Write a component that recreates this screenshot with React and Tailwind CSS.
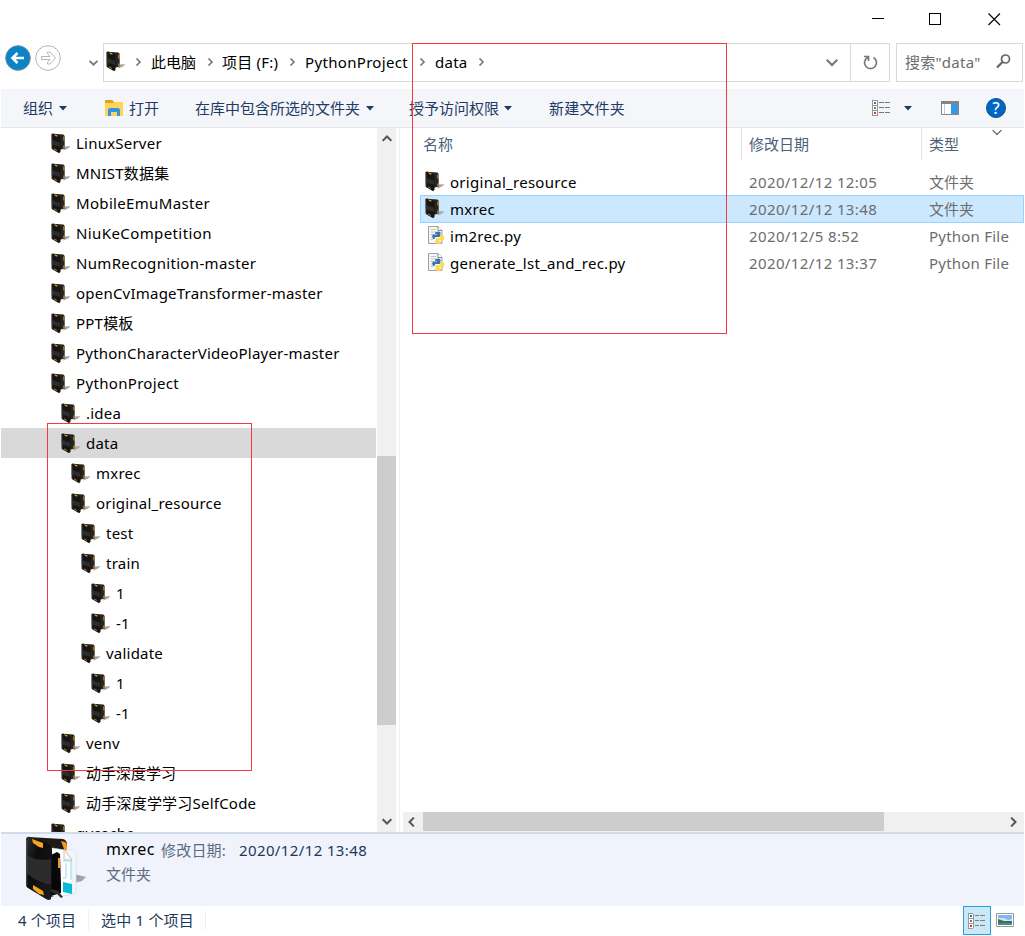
function FolderIcon({ className = "" }) {
  return (
    <svg className={"shrink-0 " + className} width="20" height="21" viewBox="0 0 20 21">
      <path d="M12 13.500 19.500 13.300 17 15.500 12.500 17.500Z" fill="#a6a6a6" />
      <path d="M2 .8 12.500 1.500 13.700 3V15.500L8 17Z" fill="#262522" />
      <path d="M12.200 3.500h1.600v4h-1.600zM12.200 12.500h1.600v3.200h-1.600z" fill="#b87b30" />
      <path d="M.5 1 2 .6 8 2.500 9.500 4.500 9.500 18.500 8.200 20.300.8 16Z" fill="#151515" />
      <path d="M.8 7 9 9.500V14L.8 11.500Z" fill="#2c2c2c" />
      <path d="M1 1.500V15.500" stroke="#4a4a4a" strokeWidth=".7" />
      <path d="M3 1.300 6.500 2.300 6.300 3.700 4.200 3Z" fill="#e09a24" />
      <path d="M3 15.200 6 17 5.800 18 3 16.500Z" fill="#a96e18" />
    </svg>
  );
}

function BigFolder() {
  return (
    <svg className="shrink-0" width="62" height="66" viewBox="0 0 62 66">
      <defs>
        <linearGradient id="cover" x1="0" y1="0" x2="1" y2="1">
          <stop offset="0" stopColor="#303030" />
          <stop offset=".35" stopColor="#0c0c0c" />
          <stop offset="1" stopColor="#1d1d1d" />
        </linearGradient>
      </defs>
      <path d="M49 38 61 41 57 45 49 47Z" fill="#9fa3ad" />
      <path d="M3 1 38 3Q42 4 42 9V55L24 62Z" fill="#1d1a17" />
      <path d="M36 5 40 6Q42 7 42 10V15L39 13Z" fill="#f2981b" />
      <path d="M38 17 41 14H49L51 16V57L40 60Z" fill="#f4f7f9" stroke="#d3dce2" strokeWidth=".6" />
      <path d="M27 12 40 14 47 24V57L38 60 27 60Z" fill="#fff" stroke="#cde6ed" strokeWidth=".6" />
      <path d="M39 13 47 24H39Z" fill="#fbfbfb" stroke="#d2aaa6" strokeWidth=".8" />
      <path d="M38 25H47M38 42H41V27M46 25V44" stroke="#8fdbe8" strokeWidth="1" fill="none" />
      <path d="M38 46 47 48V58L38 56Z" fill="#08bcd7" />
      <path d="M26 19 32 16 35 18 36 48V57L26 60Z" fill="#080808" />
      <path d="M33 22h2v10h-2z" fill="#f09b20" />
      <path d="M26 53 33 55 38 61 36 62 32 58 26 56Z" fill="#302e2a" />
      <path d="M1 4Q1 0 5 1L22 7Q27 9 27 16L26 63Q24 65 21 63L3 52Q1 51 1 48Z" fill="url(#cover)" />
      <path d="M2 20Q13 26 26 24V48Q13 46 2 37Z" fill="#2b2b2b" />
      <path d="M2 20Q13 26 26 24M2 37Q13 46 26 48" stroke="#404040" strokeWidth=".6" fill="none" />
      <path d="M1.800 4V49" stroke="#666" strokeWidth=".7" />
      <path d="M7 3 18 7 18 12 14 11 8 7Z" fill="#f7a51c" />
      <path d="M8 49 18 55 19 59 14 58 8 53Z" fill="#f7a51c" />
    </svg>
  );
}

function PyIcon() {
  return (
    <svg className="shrink-0" width="17" height="19" viewBox="0 0 17 19">
      <path d="M.5.5H10L14 4.500V17.500H.5Z" fill="#f8f8f8" stroke="#a0a0a0" />
      <path d="M10 .5V4.500H14" fill="#fff" stroke="#8a8a8a" />
      <path d="M2.500 3.500H8M2.500 6H8M2.500 8.500H6M2.500 11H5M2.500 13.500H5" stroke="#c5c5c5" />
      <path d="M7.500 6Q11 4.800 12.500 6.300V9.500Q12.500 11 11 11H8Q6.500 11 6.500 13H5Q3.500 10 5 8.600H9V8H7Z" fill="#3776ab" />
      <path d="M12.500 8.500H14.500Q17.500 11.500 15.500 14H11V15H13.500V17Q10.500 18.800 7.500 17V13.500Q7.500 12 9 12H11.500Q12.500 12 12.500 10.500Z" fill="#ffd94f" />
    </svg>
  );
}

function ListIcon({ dense }) {
  const marks = ["#2e7bc0", "#6c8b33", "#d13c22"];
  return (
    <svg width={dense ? 18 : 19} height="16" viewBox="0 0 19 16" shapeRendering="crispEdges">
      <path d="M.5.5H5.500V15.500H.5ZM.5 5.500H5.500M.5 10.500H5.500" fill="#fff" stroke="#969696" />
      {marks.map((c, i) => (
        <g key={c}>
          <rect x="2" y={2 + i * 5} width="2" height="2" fill={c} />
          <path d={i === 0 ? "M7 2.500H12M13 2.500H18" : i === 1 ? "M7 7.500H12M13 7.500H18" : "M7 12.500H12M13 12.500H18"} stroke="#777" />
        </g>
      ))}
    </svg>
  );
}

function Chevron({ dir = "right", size = 8, color = "#777", w = 1.6 }) {
  const d = { right: "M2.500.5 6 4 2.500 7.500", left: "M5.500.5 2 4 5.500 7.500", down: "M.5 2.500 4 6 7.500 2.500", up: "M.5 5.500 4 2 7.500 5.500" }[dir];
  return (
    <svg className="shrink-0" width={size} height={size} viewBox="0 0 8 8" fill="none" stroke={color} strokeWidth={w}>
      <path d={d} />
    </svg>
  );
}

function Caret() {
  return (
    <svg className="shrink-0" width="8" height="5" viewBox="0 0 8 5">
      <path d="M0 0H8L4 4.500Z" fill="#1e3a66" />
    </svg>
  );
}

const tree = [
  ["LinuxServer", 0], ["MNIST数据集", 0], ["MobileEmuMaster", 0], ["NiuKeCompetition", 0],
  ["NumRecognition-master", 0], ["openCvImageTransformer-master", 0], ["PPT模板", 0],
  ["PythonCharacterVideoPlayer-master", 0], ["PythonProject", 0], [".idea", 1], ["data", 1],
  ["mxrec", 2], ["original_resource", 2], ["test", 3], ["train", 3], ["1", 4], ["-1", 4],
  ["validate", 3], ["1", 4], ["-1", 4], ["venv", 1], ["动手深度学习", 1], ["动手深度学学习SelfCode", 1], ["qycache", 0],
];
const indents = ["pl-[50px]", "pl-[60px]", "pl-[70px]", "pl-[80px]", "pl-[90px]"];
const tracking = {
  MobileEmuMaster: "tracking-[0.33px]",
  NiuKeCompetition: "tracking-[0.4px]",
  "NumRecognition-master": "tracking-[0.33px]",
  PythonProject: "tracking-[0.33px]",
  "动手深度学习": "tracking-normal",
};

const files = [
  ["original_resource", "2020/12/12 12:05", "文件夹"],
  ["mxrec", "2020/12/12 13:48", "文件夹"],
  ["im2rec.py", "2020/12/5 8:52", "Python File"],
  ["generate_lst_and_rec.py", "2020/12/12 13:37", "Python File"],
];

export default function App() {
  return (
    <div className="relative flex h-[936px] w-[1025px] flex-col overflow-hidden bg-white px-px font-['Noto_Sans','Noto_Sans_CJK_SC',sans-serif] text-[15px] leading-5 whitespace-nowrap text-black">
      <header className="flex h-[43px] shrink-0 justify-end gap-[41px] pt-[13px] pr-[23px]">
        <svg className="-mr-px" width="13" height="13" viewBox="0 0 13 13" shapeRendering="crispEdges"><path d="M0 5.500H12" stroke="#000" /></svg>
        <svg className="mr-px ml-1" width="13" height="13" viewBox="0 0 13 13" shapeRendering="crispEdges"><path d="M.5.5H11.500V11.500H.5Z" fill="none" stroke="#000" /></svg>
        <svg className="ml-1" width="13" height="13" viewBox="0 0 13 13"><path d="M.5.5 12 12M12 .5.5 12" stroke="#000" strokeWidth="1.100" /></svg>
      </header>

      <div className="flex h-[39px] shrink-0">
        <div className="flex w-[102px] shrink-0 pt-[2px] pl-[4px]">
          <svg className="shrink-0" width="26" height="26" viewBox="0 0 26 26">
            <circle cx="13" cy="13" r="12.300" fill="#0a84c6" stroke="#6b8a9c" strokeWidth="1" />
            <path d="M19 13H8M12.500 8 7.500 13 12.500 18" fill="none" stroke="#fff" strokeWidth="2.600" />
          </svg>
          <svg className="ml-[4px] shrink-0" width="26" height="26" viewBox="0 0 26 26" fill="none" stroke="#b4b4b4">
            <circle cx="13" cy="13" r="12.300" />
            <path d="M6.500 11.500H15L12.500 8.500V7H15L20.500 13 15 19H12.500V17.500L15 14.500H6.500Z" />
          </svg>
          <div className="mt-[13px] ml-[28px]"><Chevron dir="down" size={9} /></div>
        </div>
        <div className="flex w-[787px] shrink-0 border border-[#d9d9d9]">
          <div className="flex w-[746px] shrink-0 items-center pb-[2px] pl-[2px]">
            <FolderIcon />
            <div className="ml-[8px]"><Chevron /></div>
            <span className="ml-[9px] w-[55px]">此电脑</span>
            <Chevron />
            <span className="ml-[8px] w-[57px] tracking-[0.2px]">项目 (F:)</span>
            <div className="ml-[9px]"><Chevron /></div>
            <span className="ml-[9px] w-[104px] tracking-[0.33px]">PythonProject</span>
            <div className="ml-[9px]"><Chevron /></div>
            <span className="ml-[9px] w-[33px] tracking-[0.25px]">data</span>
            <div className="ml-[9px]"><Chevron /></div>
            <div className="mr-[12px] ml-auto"><Chevron dir="down" size={12} w={1.4} /></div>
          </div>
          <div className="flex grow items-center justify-center border-l border-[#d9d9d9]">
            <svg width="15" height="15" viewBox="0 0 15 15" fill="none" stroke="#777" strokeWidth="1.700"><path d="M10.500 2.500A6 6 0 1 1 4.500 2.500M1 1.500H5.500V6" /></svg>
          </div>
        </div>
        <div className="ml-[6px] flex w-[127px] shrink-0 items-center border border-[#d9d9d9] pb-[2px] pl-[8px] text-[#6d6d6d]">
          <span className="w-[77px] tracking-[0.25px]">搜索"data"</span>
          <svg className="ml-[14px]" width="15" height="15" viewBox="0 0 15 15" fill="none" stroke="#666"><circle cx="9.500" cy="5" r="4" strokeWidth="1.700" /><path d="M6.500 8 1 13.500" strokeWidth="2.300" /></svg>
        </div>
      </div>

      <div className="mt-[7px] flex h-[39px] shrink-0 items-center border-b border-[#e4e7ea] bg-[#f4f6f9] text-[#1e3a66]">
        <div className="flex w-[104px] items-center gap-[6px] pl-[22px]"><span>组织</span><Caret /></div>
        <div className="flex w-[90px] items-center gap-[6px]">
          <svg width="18" height="17" viewBox="0 0 18 17"><path d="M0 0H7L9 2H18V16H0Z" fill="#ffd45c" /><path d="M0 0H7L9 2 8 3H0Z" fill="#e2a313" /><path d="M3 16V9.500L4.500 8H13.500L15 9.500V16H12V12H6V16Z" fill="#3394df" /></svg>
          <span>打开</span>
        </div>
        <div className="flex w-[214px] items-center gap-[6px]"><span>在库中包含所选的文件夹</span><Caret /></div>
        <div className="flex w-[140px] items-center gap-[5px]"><span>授予访问权限</span><Caret /></div>
        <span className="tracking-[0.2px]">新建文件夹</span>
        <div className="ml-auto flex items-center pr-[18px]">
          <ListIcon />
          <div className="ml-[13px]"><Caret /></div>
          <svg className="ml-[29px]" width="18" height="15" viewBox="0 0 18 15" shapeRendering="crispEdges"><path d="M.5.5H17.500V13.500H.5Z" fill="#fff" stroke="#858585" /><path d="M0 0H18V3H0Z" fill="#858585" /><path d="M3.500 3V13" stroke="#c8c8c8" /><path d="M10 3H17V13H10Z" fill="#3399e3" /></svg>
          <div className="ml-[27px] flex size-[20px] items-center justify-center rounded-full border border-[#004f93] bg-[#0067c5] text-[16px] font-medium text-white">?</div>
        </div>
      </div>

      <main className="flex h-[704px] shrink-0">
        <nav className="mr-px h-full w-[375px] shrink-0 overflow-hidden">
          {tree.map(([name, level], i) => (
            <div key={i} className={"flex h-[30px] items-center " + indents[level] + (i === 10 ? " bg-[#d9d9d9]" : "")}>
              <FolderIcon />
              <span className={"ml-[5px] " + (tracking[name] || "tracking-[0.22px]")}>{name}</span>
            </div>
          ))}
        </nav>
        <div className="flex w-[19px] shrink-0 flex-col items-center bg-[#f0f0f0] pt-[6px] pb-[6px]">
          <Chevron dir="up" size={10} color="#555" />
          <div className="mt-[312px] h-[269px] w-full bg-[#cdcdcd]" />
          <div className="mt-auto"><Chevron dir="down" size={10} color="#555" /></div>
        </div>
        <div className="ml-[3px] flex grow flex-col border-l border-[#f0f0f0]">
          <div className="flex h-[40px] pl-[23px] text-[#4c607a]">
            <span className="w-[318px] pt-[6px]">名称</span>
            <div className="h-[32px] w-[180px] border-l border-[#e2e2e2] pt-[6px] pl-[7px]">修改日期</div>
            <div className="flex h-[32px] grow border-l border-[#e2e2e2] pt-[6px] pl-[7px]"><span>类型</span><div className="-mt-[7px] ml-[33px]"><Chevron dir="down" size={10} color="#555" w={0.9} /></div></div>
          </div>
          <div className="grow pl-[20px]">
            {files.map(([name, date, type], i) => (
              <div key={name} className={"flex h-[28px] items-center border pl-[4px] -mb-px " + (i === 1 ? "border-[#99d1ff] bg-[#cce8ff]" : "border-transparent")}>
                <div className="flex w-[25px] shrink-0 items-center">{i < 2 ? <FolderIcon className="-mt-[2px]" /> : <div className="pl-[3px] pb-[2px]"><PyIcon /></div>}</div>
                <span className="-mt-px w-[299px] tracking-[0.28px]">{name}</span>
                <span className="-mt-px w-[180px] tracking-[0.38px] text-[#6d6d6d]">{date}</span>
                <span className={"-mt-px text-[#6d6d6d] " + (i > 1 ? "tracking-[0.22px]" : "")}>{type}</span>
              </div>
            ))}
          </div>
          <div className="ml-[3px] flex h-[20px] items-center bg-[#f0f0f0] pl-[4px]">
            <Chevron dir="left" size={10} color="#555" />
            <div className="mb-px ml-[6px] h-[19px] w-[461px] bg-[#cdcdcd]" />
            <div className="mr-[6px] ml-auto"><Chevron size={10} color="#555" /></div>
          </div>
        </div>
      </main>

      <section className="flex h-[74px] shrink-0 border-t-2 border-[#cfdbeb] bg-[#f0f3fb] pl-[24px]">
        <div className="pt-[2px]"><BigFolder /></div>
        <div className="ml-[19px] flex flex-col gap-[4px] pt-[6px] text-[#5a6b82]">
          <div className="flex"><span className="-mt-px w-[55px] text-[16px] tracking-[0.5px] text-black">mxrec</span><span className="w-[78px] tracking-[0.2px]">修改日期:</span><span className="tracking-[0.38px] text-[#1e395b]">2020/12/12 13:48</span></div>
          <span>文件夹</span>
        </div>
      </section>

      <footer className="flex h-[30px] shrink-0 items-center pb-[2px] text-[#1e395b]">
        <span className="ml-[17px] w-[71px] border-r border-[#f0f0f0] tracking-[0.1px]">4 个项目</span>
        <span className="ml-[12px] w-[105px] border-r border-[#f0f0f0] tracking-[0.2px]">选中 1 个项目</span>
        <div className="ml-auto flex h-[29px] w-[28px] shrink-0 items-center justify-center self-start border border-[#26a0da] bg-[#cbe8f6]"><ListIcon dense /></div>
        <svg className="mr-[10px] ml-[5px] shrink-0" width="18" height="14" viewBox="0 0 18 14"><path d="M.5.5H17.500V13.500H.5Z" fill="#fff" stroke="#999" /><path d="M2 2H16V12H2Z" fill="#81b5f4" /><path d="M2 5H8L12 7 16 6V8H2Z" fill="#d1e5ef" /><path d="M2 6 8 8 16 8V10H2Z" fill="#397254" /><path d="M2 10H16V12H2Z" fill="#5084a0" /></svg>
      </footer>

      <div className="pointer-events-none absolute top-[43px] left-[412px] h-[291px] w-[315px] border border-[#f43a3a]" />
      <div className="pointer-events-none absolute top-[423px] left-[47px] h-[348px] w-[205px] border border-[#f43a3a]" />
    </div>
  );
}
